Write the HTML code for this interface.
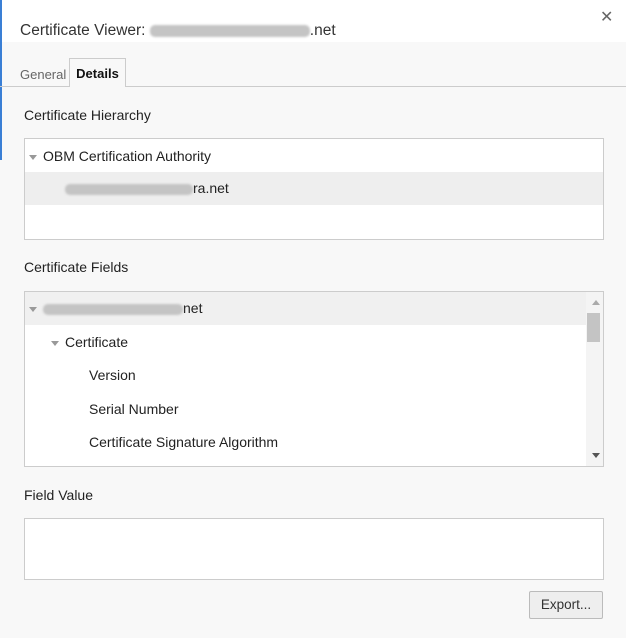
<!DOCTYPE html>
<html><head><style>
*{margin:0;padding:0;box-sizing:border-box}
body{width:626px;height:638px;background:#f8f8f8;font-family:"Liberation Sans",sans-serif;font-size:14px;color:#222;position:relative;overflow:hidden}
.a{position:absolute}
.box{position:absolute;background:#fff;border:1px solid #ccc}
.blur{display:inline-block;background:#c4c4c4;height:11px;border-radius:5px;vertical-align:middle;filter:blur(1px)}
.tri{display:inline-block;width:0;height:0;border-left:4px solid transparent;border-right:4px solid transparent;border-top:5px solid #999;vertical-align:middle;margin-right:6px}
.row{position:absolute;left:0;right:0;height:33px;line-height:33px;white-space:nowrap}
</style></head><body>
<div class="a" style="left:0;top:0;width:626px;height:42px;background:#fff"></div>
<div class="a" style="left:0;top:0;width:2px;height:160px;background:#3a7fd5"></div>
<div class="a" style="left:20px;top:22px;font-size:15.5px;color:#333">Certificate Viewer: <span class="blur" style="width:160px;height:12px"></span>.net</div>
<div class="a" style="left:600px;top:7px;font-size:16px;color:#666">✕</div>
<div class="a" style="left:0;top:86px;width:626px;height:1px;background:#ccc"></div>
<div class="a" style="left:20px;top:67px;color:#666;font-size:13px">General</div>
<div class="a" style="left:69px;top:58px;width:57px;height:29px;border:1px solid #ccc;border-bottom:none;background:#f8f8f8;font-weight:bold;color:#111;text-align:center;line-height:30px;font-size:13px">Details</div>
<div class="a" style="left:24px;top:107px">Certificate Hierarchy</div>
<div class="box" style="left:24px;top:138px;width:580px;height:102px">
 <div class="row" style="top:1px;padding-left:4px"><span class="tri"></span>OBM Certification Authority</div>
 <div class="row" style="top:33px;background:#eee;padding-left:40px"><span class="blur" style="width:128px"></span>ra.net</div>
</div>
<div class="a" style="left:24px;top:259px">Certificate Fields</div>
<div class="box" style="left:24px;top:291px;width:580px;height:176px">
 <div class="row" style="top:0;background:#f0f0f0;padding-left:4px;right:17px"><span class="tri"></span><span class="blur" style="width:140px"></span>net</div>
 <div class="row" style="top:34px;padding-left:26px"><span class="tri"></span>Certificate</div>
 <div class="row" style="top:67px;padding-left:64px">Version</div>
 <div class="row" style="top:101px;padding-left:64px">Serial Number</div>
 <div class="row" style="top:134px;padding-left:64px">Certificate Signature Algorithm</div>
 <div class="a" style="right:0;top:0;width:17px;height:174px;background:#f4f4f4"></div>
 <div class="a" style="right:3px;top:8px;border-left:4px solid transparent;border-right:4px solid transparent;border-bottom:5px solid #aaa"></div>
 <div class="a" style="right:3px;top:21px;width:13px;height:29px;background:#c4c4c4"></div>
 <div class="a" style="right:3px;top:161px;border-left:4px solid transparent;border-right:4px solid transparent;border-top:5px solid #555"></div>
</div>
<div class="a" style="left:24px;top:487px">Field Value</div>
<div class="box" style="left:24px;top:518px;width:580px;height:62px"></div>
<div class="a" style="left:529px;top:591px;width:74px;height:28px;border:1px solid #bbb;border-radius:2px;background:#eee;text-align:center;line-height:26px;color:#333;font-size:13.5px">Export...</div>
</body></html>
